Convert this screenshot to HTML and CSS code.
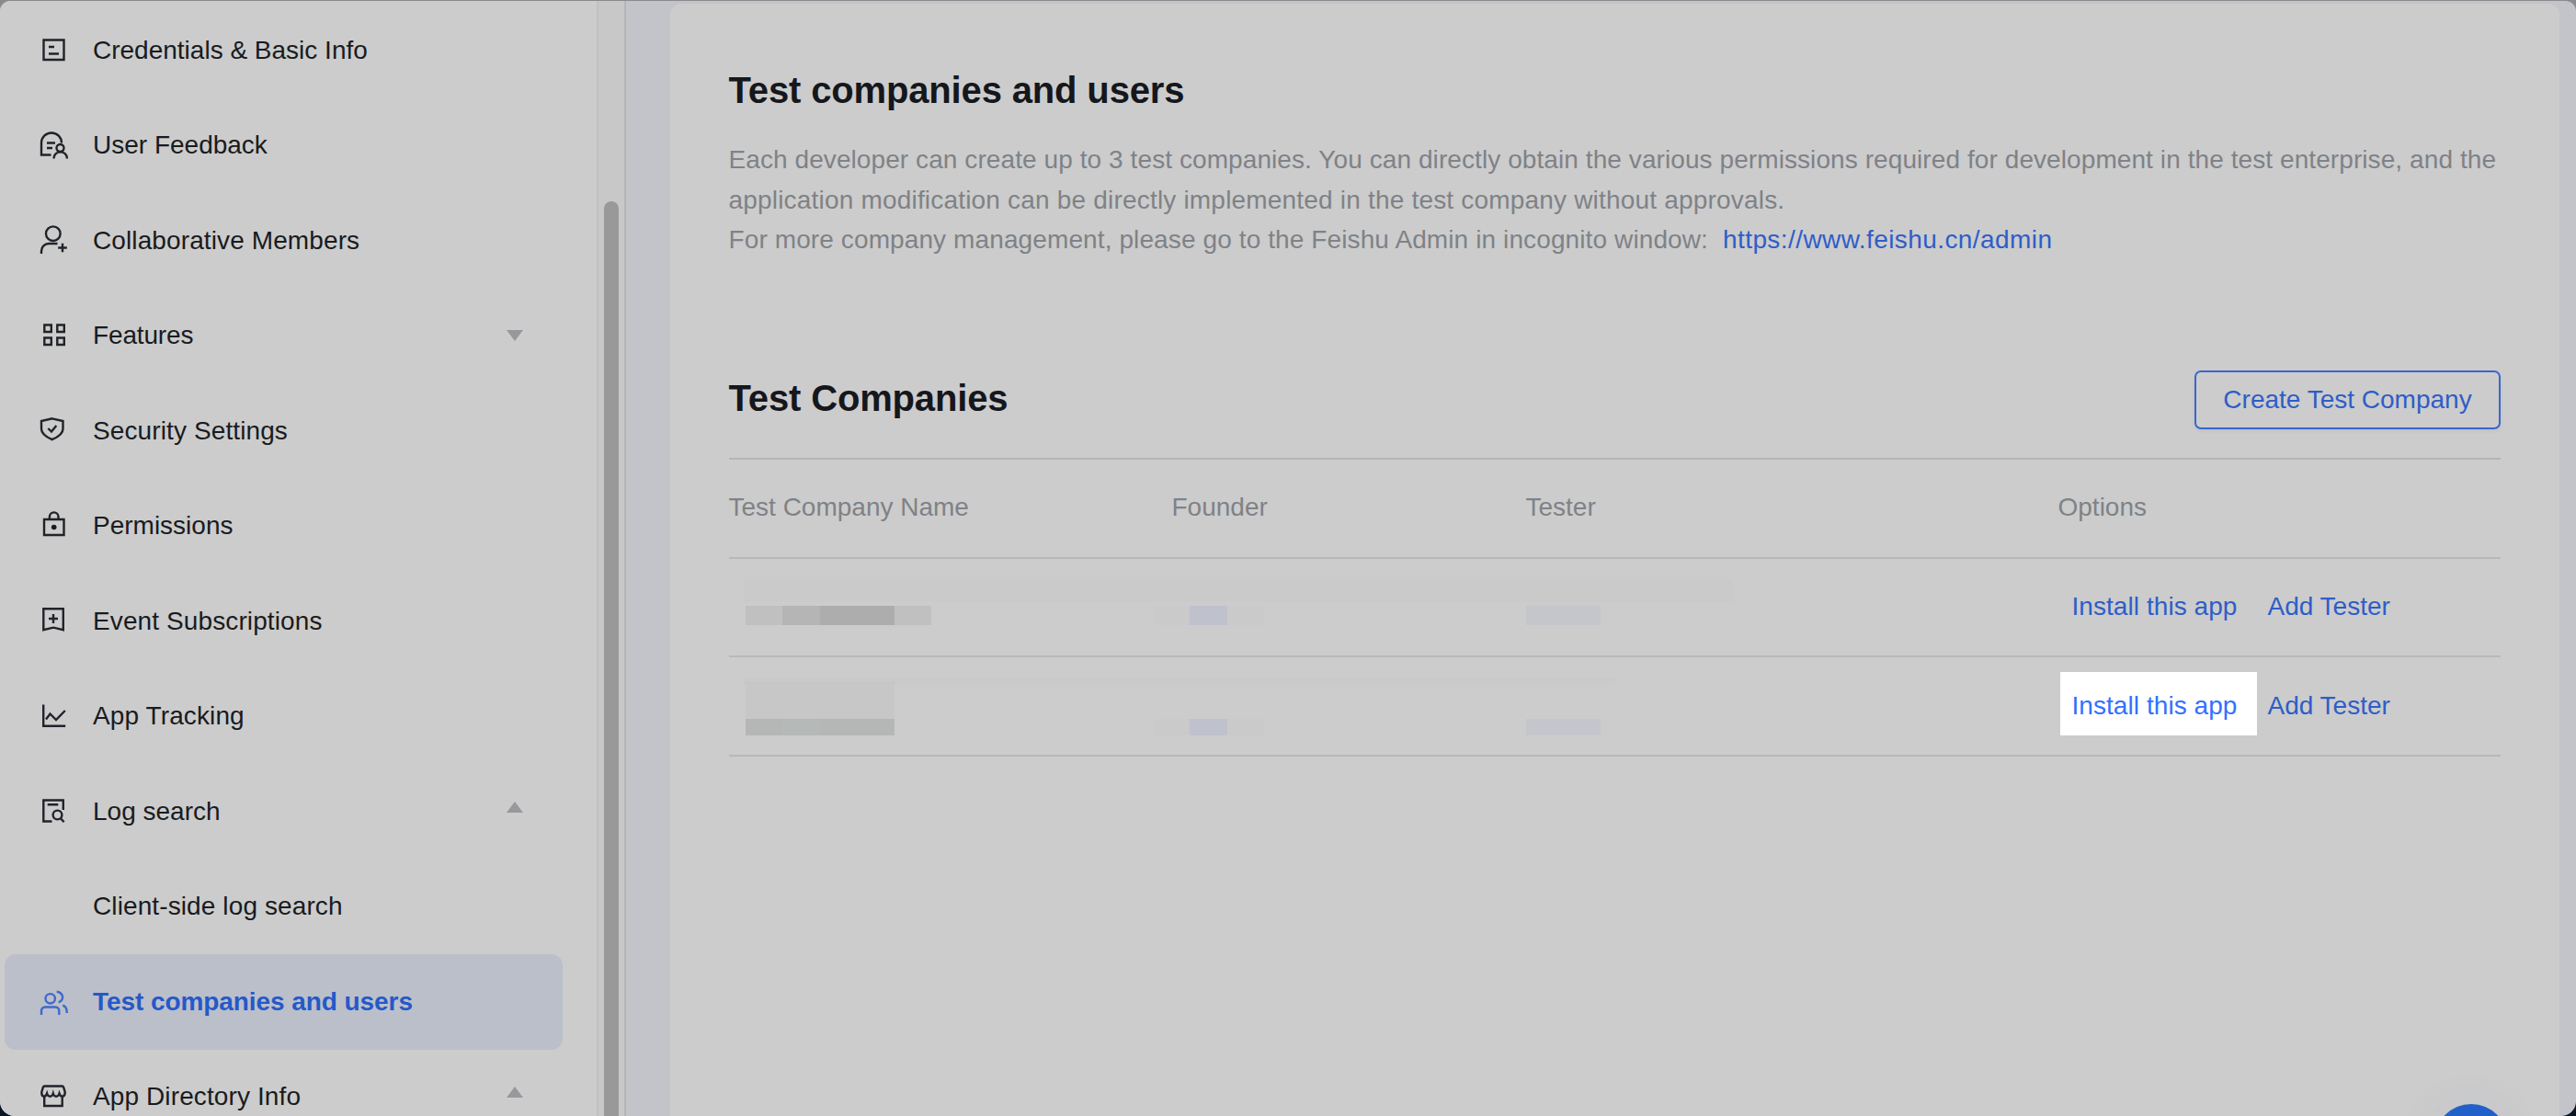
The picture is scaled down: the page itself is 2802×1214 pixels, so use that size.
FILE: index.html
```html
<!DOCTYPE html>
<html lang="en">
<head>
<meta charset="utf-8">
<title>Test companies and users</title>
<link rel="stylesheet" href="styles.css">
</head>
<body>
<div class="window">
  <aside class="sidebar">
    <nav class="menu">
      <a class="item"><svg class="icon" viewBox="0 0 32 32"><path d="M5.500 5.500h22v21.500h-22zM11 13h6M11 20.500h11"/></svg><span class="label">Credentials &amp; Basic Info</span></a>
      <a class="item"><svg class="icon" viewBox="0 0 32 32"><path d="M13.500 27.500H3V14.500a11 11 0 0 1 22 0M9 14.500h9M9 20h6"/><circle cx="23.500" cy="20" r="4"/><path d="M16.500 31.500c0-9.500 14.500-9.500 14.500 0"/></svg><span class="label">User Feedback</span></a>
      <a class="item"><svg class="icon" viewBox="0 0 32 32"><circle cx="15.800" cy="9.200" r="7.800"/><path d="M3 31v-3a8 8 0 0 1 8-8h9.500M26 19.800v9.500M21.200 24.500h9.600"/></svg><span class="label loose">Collaborative Members</span></a>
      <a class="item"><svg class="icon" viewBox="0 0 32 32"><path d="M6.300 5.500h7.500v7.500h-7.500zM20.300 5.500h7.500v7.500h-7.500zM6.300 19.500h7.500v7.500h-7.500zM20.300 19.500h7.500v7.500h-7.500z"/></svg><span class="label tight">Features</span><svg class="caret" viewBox="0 0 18 12"><path d="M0 0h18l-9 12z"/></svg></a>
      <a class="item"><svg class="icon" viewBox="0 0 32 32"><path d="M14.700 3.300l11.800 2.700v8.500c0 5.500-5.500 9-11.800 11.700C8.500 23.500 3 20 3 14.500V6zM10.300 14l3.700 3.500 5.300-6.500"/></svg><span class="label loose">Security Settings</span></a>
      <a class="item"><svg class="icon" viewBox="0 0 32 32"><path d="M6 10h21.500v17H6zM11.900 10V7.200a4.800 4.800 0 0 1 9.600 0V10"/><circle class="solid" cx="16.700" cy="18.500" r="2.800"/></svg><span class="label">Permissions</span></a>
      <a class="item"><svg class="icon" viewBox="0 0 32 32"><path d="M5.300 3.300h21.500v22.900l-10.700-2.500-10.800 2.500zM16 9v10M11 14h10"/></svg><span class="label loose">Event Subscriptions</span></a>
      <a class="item"><svg class="icon" viewBox="0 0 32 32"><path d="M5.200 4.500v23.300h24M8 20.500l4.500-6 6.500 6.500 9.800-10"/></svg><span class="label loose">App Tracking</span></a>
      <a class="item"><svg class="icon" viewBox="0 0 32 32"><path d="M14.500 27.500H5.300V4.500h21.500v10.500M9.700 9.300h11.600"/><circle cx="20.500" cy="20.500" r="4.900"/><path d="M24 24.300l3.600 4"/></svg><span class="label">Log search</span><svg class="caret up" viewBox="0 0 18 12"><path d="M0 12h18L9 0z"/></svg></a>
      <a class="item sub"><span class="label loose">Client-side log search</span></a>
      <a class="item active"><svg class="icon" viewBox="0 0 32 32"><circle cx="12.700" cy="13.300" r="5.200"/><path d="M3 31v-4.500a4 4 0 0 1 4-4h11.300a4 4 0 0 1 4 4V31M19.700 5.800c7.500 1.200 8.700 9 2 11.500M26.300 20.800c3.500.700 4.500 3 4.500 8.200"/></svg><span class="label">Test companies and users</span></a>
      <a class="item"><svg class="icon" viewBox="0 0 32 32"><path d="M6.500 5.500h19c.8 0 1.300.3 1.600 1.200l1.600 5.300c.3 5.600-4.500 6.200-6.200 1.500-1.200 4.300-5.500 4.300-6.700 0-1.200 4.300-5.500 4.300-6.700 0-1.700 4.700-6.200 4.100-5.800-1.500l1.600-5.300c.3-.9.800-1.200 1.600-1.200zM6.200 17v10h19.500V17"/></svg><span class="label loose">App Directory Info</span><svg class="caret up" viewBox="0 0 18 12"><path d="M0 12h18L9 0z"/></svg></a>
    </nav>
    <div class="track"><div class="thumb"></div></div>
  </aside>
  <main class="content">
    <section class="card">
      <h1 class="title">Test companies and users</h1>
      <div class="intro">
        <p class="lead">Each developer can create up to 3 test companies. You can directly obtain the various permissions required for development in the test enterprise, and the</p>
        <p class="follow">application modification can be directly implemented in the test company without approvals.</p>
        <p class="row"><span class="loose">For more company management, please go to the Feishu Admin in incognito window:</span><a class="link url">https://www.feishu.cn/admin</a></p>
      </div>
      <header class="head"><h2 class="title">Test Companies</h2><button class="create">Create Test Company</button></header>
      <div class="table">
        <div class="tr th"><span>Test Company Name</span><span>Founder</span><span>Tester</span><span>Options</span></div>
        <div class="tr first">
          <div class="mosaic"><i class="a"></i><i class="b"></i><i class="c"></i><i class="c"></i><i class="a"></i></div>
          <div class="mosaic"><i class="g"></i><i class="v"></i><i class="g"></i></div>
          <div class="mosaic"><i class="w"></i><i class="w"></i></div>
          <div class="options"><a class="link install">Install this app</a><a class="link">Add Tester</a></div>
        </div>
        <div class="tr second">
          <div class="mosaic"><i class="d"></i><i class="e"></i><i class="d"></i><i class="d"></i></div>
          <div class="mosaic"><i class="g"></i><i class="v"></i><i class="g"></i></div>
          <div class="mosaic"><i class="w"></i><i class="w"></i></div>
          <div class="options"><a class="link install spotlight">Install this app</a><a class="link">Add Tester</a></div>
        </div>
      </div>
    </section>
  </main>
  <div class="fab"></div>
</div>
</body>
</html>
```
FILE: styles.css
```css
* { box-sizing: border-box; }
body {
  margin: 0;
  height: 1214px;
  overflow: hidden;
  background: linear-gradient(#8a8a8c 50%, #0a1524 50%);
  font-family: "Liberation Sans", Arial, sans-serif;
  font-size: 28px;
  line-height: 44px;
  color: #191b20;
}
.window {
  position: relative;
  display: flex;
  height: 1214px;
  border-top: 1px solid #8a8a8c;
  border-radius: 12px 12px 16px 16px;
  overflow: hidden;
  background: #c3c4c9;
}
.sidebar { display: flex; width: 681px; background: #ccc; }
.menu { width: 649px; padding: 2px 37px 0 5px; flex: none; }
.item {
  display: flex;
  align-items: center;
  height: 103.5px;
  padding: 0 43px 0 37px;
  border-radius: 12px;
}
.icon, .caret { flex: none; display: block; overflow: visible; }
.icon {
  width: 32px;
  height: 32px;
  margin: 0 27px 2px 0;
  fill: none;
  stroke: #202329;
  stroke-width: 2.4;
}
.icon .solid { fill: #191b20; stroke: none; }
.caret { width: 18px; height: 12px; margin-left: auto; fill: #97989b; }
.caret.up { margin-bottom: 10px; }
.label { white-space: nowrap; }
.loose { letter-spacing: .11px; }
.tight { letter-spacing: -.15px; }
.sub { padding-left: 96px; }
.active { background: #bbbfca; color: #2559c8; font-weight: 700; letter-spacing: -.07px; }
.active .icon { stroke: #3f69cb; }
.track {
  width: 32px;
  padding: 218px 0 0 6px;
  border-left: 2px solid #c0c0c0;
  border-right: 2px solid #b5b5b7;
  background: #c8c8c8;
}
.thumb { width: 16px; height: 1010px; border-radius: 8px; background: #999; }
.content { flex: 1; padding: 3px 18px 0 48px; }
.card {
  height: 1230px;
  padding: 70px 64px 0 63.5px;
  border-radius: 12px;
  background: #ccc;
}
.title {
  margin: 0;
  font-size: 40px;
  line-height: 48px;
  font-weight: 700;
  letter-spacing: -.15px;
  color: #15171c;
  white-space: nowrap;
}
.intro { margin-top: 30px; color: #7f8287; }
.intro p { margin: 0; height: 43.7px; white-space: nowrap; }
.lead { letter-spacing: .083px; }
.follow { letter-spacing: .19px; }
.row { display: flex; gap: 16px; }
.link { color: #2f5dc8; white-space: nowrap; }
.url { letter-spacing: .42px; }
.head {
  display: flex;
  align-items: center;
  justify-content: space-between;
  height: 64px;
  margin-top: 120px;
}
.head .title { margin-bottom: 4px; }
.create {
  width: 333px;
  height: 64px;
  padding: 0;
  border: 2px solid #3a66cc;
  border-radius: 7px;
  background: transparent;
  color: #2f5dc8;
  font: inherit;
  white-space: nowrap;
  box-shadow: 0 2px 4px rgba(0, 0, 0, .06);
}
.table { margin-top: 31px; border-top: 2px solid #b4b5b8; }
.tr {
  display: grid;
  grid-template-columns: 482px 385px 579px 1fr;
  align-items: center;
  height: 107.5px;
  border-bottom: 2px solid #b8b8b8;
}
.th { color: #7f8287; padding-bottom: 1px; }
.first { background: linear-gradient(#cacaca, #cacaca) 16px 22px / 1076px 25px no-repeat; }
.second {
  background:
    linear-gradient(#c7c7c7, #c7c7c7) 18px 26px / 162px 42px no-repeat,
    linear-gradient(#cacaca, #cacaca) 16px 22px / 948px 8px no-repeat;
}
.mosaic { display: flex; height: 21px; margin-top: 18px; }
.second .mosaic { margin-top: 46px; height: 18px; }
.mosaic i { width: 40.6px; }
.mosaic:first-child { padding-left: 18px; }
.mosaic:nth-child(2) { margin-left: -21px; }
.mosaic .a { background: #c0c0c0; }
.mosaic .b { background: #b5b5b5; }
.mosaic .c { background: #adadad; }
.mosaic .d { background: #b5b6b6; }
.mosaic .e { background: #b5b9b8; }
.mosaic .g { background: #cacaca; }
.mosaic .v { background: #bfc2cd; }
.mosaic .w { background: #c4c6cc; }
.options { display: flex; align-items: center; }
.install {
  display: flex;
  align-items: center;
  width: 214px;
  height: 69px;
  margin: 0 12px 4px 2px;
  padding: 4px 0 0 13px;
  letter-spacing: .06px;
}
.spotlight { background: #fff; color: #3370ff; }
.fab {
  position: absolute;
  left: 2648px;
  top: 1200px;
  width: 80px;
  height: 80px;
  border-radius: 50%;
  background: #2160c8;
  box-shadow: 0 4px 50px rgba(60, 90, 160, .08);
}
```
